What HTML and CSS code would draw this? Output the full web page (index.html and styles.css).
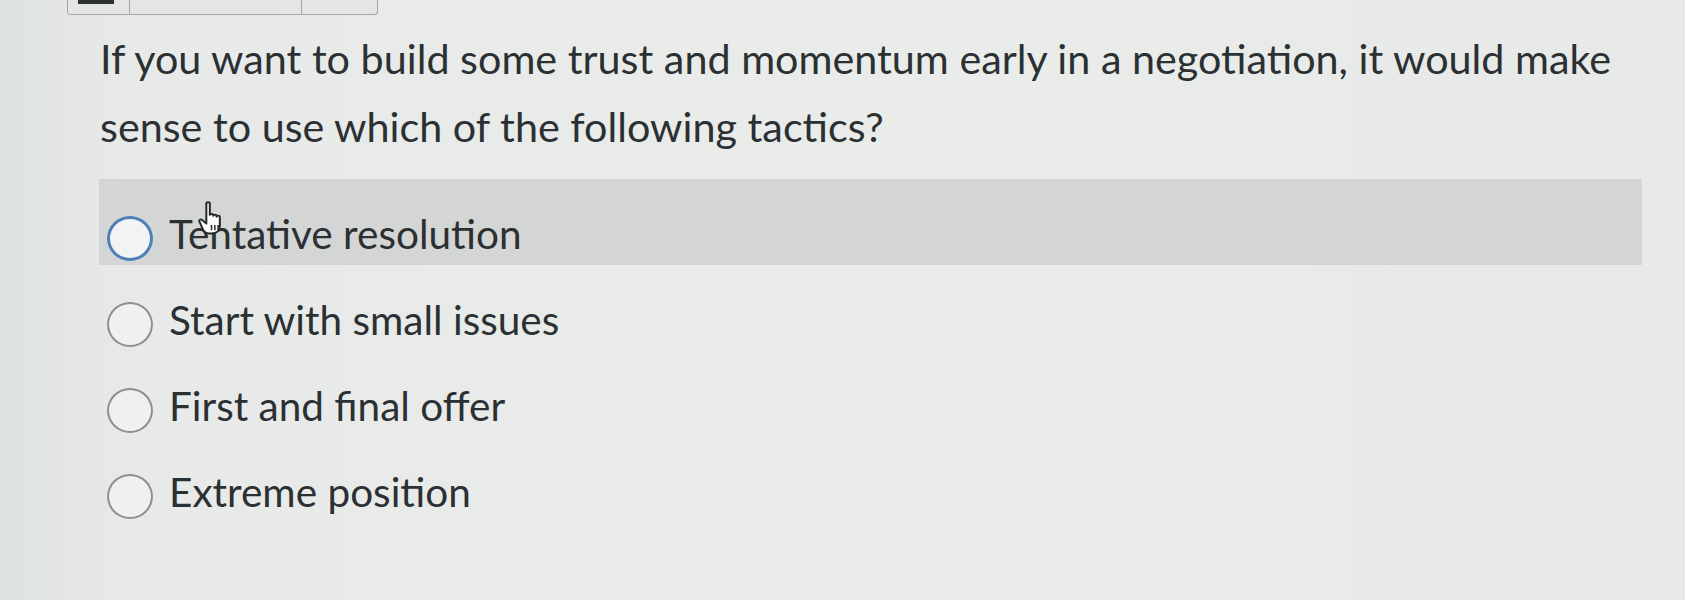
FILE: index.html
```html
<!DOCTYPE html>
<html lang="en">
<head>
<meta charset="utf-8">
<title>Quiz question</title>
<link rel="stylesheet" href="styles.css">
</head>
<body>
<div class="page">
  <div class="toolbar">
    <div class="seg seg-a"><span class="mark"></span></div>
    <div class="seg seg-b"></div>
    <div class="seg seg-c"></div>
  </div>
  <div class="question">If you want to build some trust and momentum early in a negotiation, it would make sense to use which of the following tactics?</div>
  <div class="answers">
    <label class="answer hover">
      <span class="radio"></span>
      <span class="text">Tentative resolution</span>
      <svg class="cursor" viewBox="0 0 18 22" width="30" height="34" preserveAspectRatio="none">
        <path d="M5 1.6c0-1.1 2.1-1.1 2.1 0V9c0-.9 2-.9 2 0v.6c0-.9 2-.9 2 0v.6c0-.9 2-.9 2 0V16c0 3-2 5-5 5H6.6c-1.8 0-2.7-.8-3.5-2.3L.9 13.3c-.5-1 .8-1.9 1.6-1L5 14.6V1.6z" fill="#ffffff" stroke="#262828" stroke-width="1.2" stroke-linejoin="round"/>
        <path d="M8.1 15.5v3.5M10.1 15.5v3.5M12.1 15.5v3.5" stroke="#262828" stroke-width="0.9"/>
      </svg>
    </label>
    <label class="answer">
      <span class="radio"></span>
      <span class="text">Start with small issues</span>
    </label>
    <label class="answer">
      <span class="radio"></span>
      <span class="text">First and final offer</span>
    </label>
    <label class="answer">
      <span class="radio"></span>
      <span class="text">Extreme position</span>
    </label>
  </div>
</div>
</body>
</html>
```

FILE: styles.css
```css
html, body {
  margin: 0;
  padding: 0;
}
body {
  width: 1685px;
  height: 600px;
  overflow: hidden;
  background: linear-gradient(90deg, #dfe2e2 0%, #e8eae9 8%, #eaecea 60%, #e7e9e8 100%);
  font-family: Lato, "Open Sans", "Liberation Sans", sans-serif;
  color: #2b3033;
}
.page {
  display: flex;
  flex-direction: column;
}
.toolbar {
  margin-left: 67px;
  width: 311px;
  height: 15px;
  box-sizing: border-box;
  border: 1.5px solid #a4a7a7;
  border-top: none;
  border-radius: 0 0 4px 4px;
  display: flex;
  background: #e4e6e6;
}
.seg {
  height: 100%;
  box-sizing: border-box;
}
.seg-a {
  width: 62px;
  border-right: 1.5px solid #a4a7a7;
  padding-left: 10px;
}
.mark {
  display: block;
  width: 36px;
  height: 4px;
  background: #2e3131;
}
.seg-b {
  width: 172px;
  border-right: 1.5px solid #a4a7a7;
}
.seg-c {
  flex: 1;
}
.question {
  margin-top: 9px;
  padding-left: 100px;
  width: 1545px;
  font-size: 41.3px;
  line-height: 68px;
  color: #2b3033;
}
.answers {
  margin-top: 19px;
  margin-left: 99px;
  width: 1543px;
  display: flex;
  flex-direction: column;
}
.answer {
  position: relative;
  height: 86px;
  box-sizing: border-box;
  padding-top: 24px;
  display: flex;
  align-items: center;
  gap: 16px;
  font-size: 40.5px;
}
.answer.hover {
  background: #d4d6d5;
}
.radio {
  margin-left: 8px;
  width: 46px;
  height: 45px;
  box-sizing: border-box;
  border-radius: 50%;
  border: 2px solid #8d9090;
  background: #eff1f1;
  flex: none;
  margin-top: 8px;
}
.answer.hover .radio {
  border: 3px solid #4f7fb9;
  background: #f1f3f4;
}
.text {
  line-height: 62px;
}
.cursor {
  position: absolute;
  left: 99px;
  top: 22px;
}
```
